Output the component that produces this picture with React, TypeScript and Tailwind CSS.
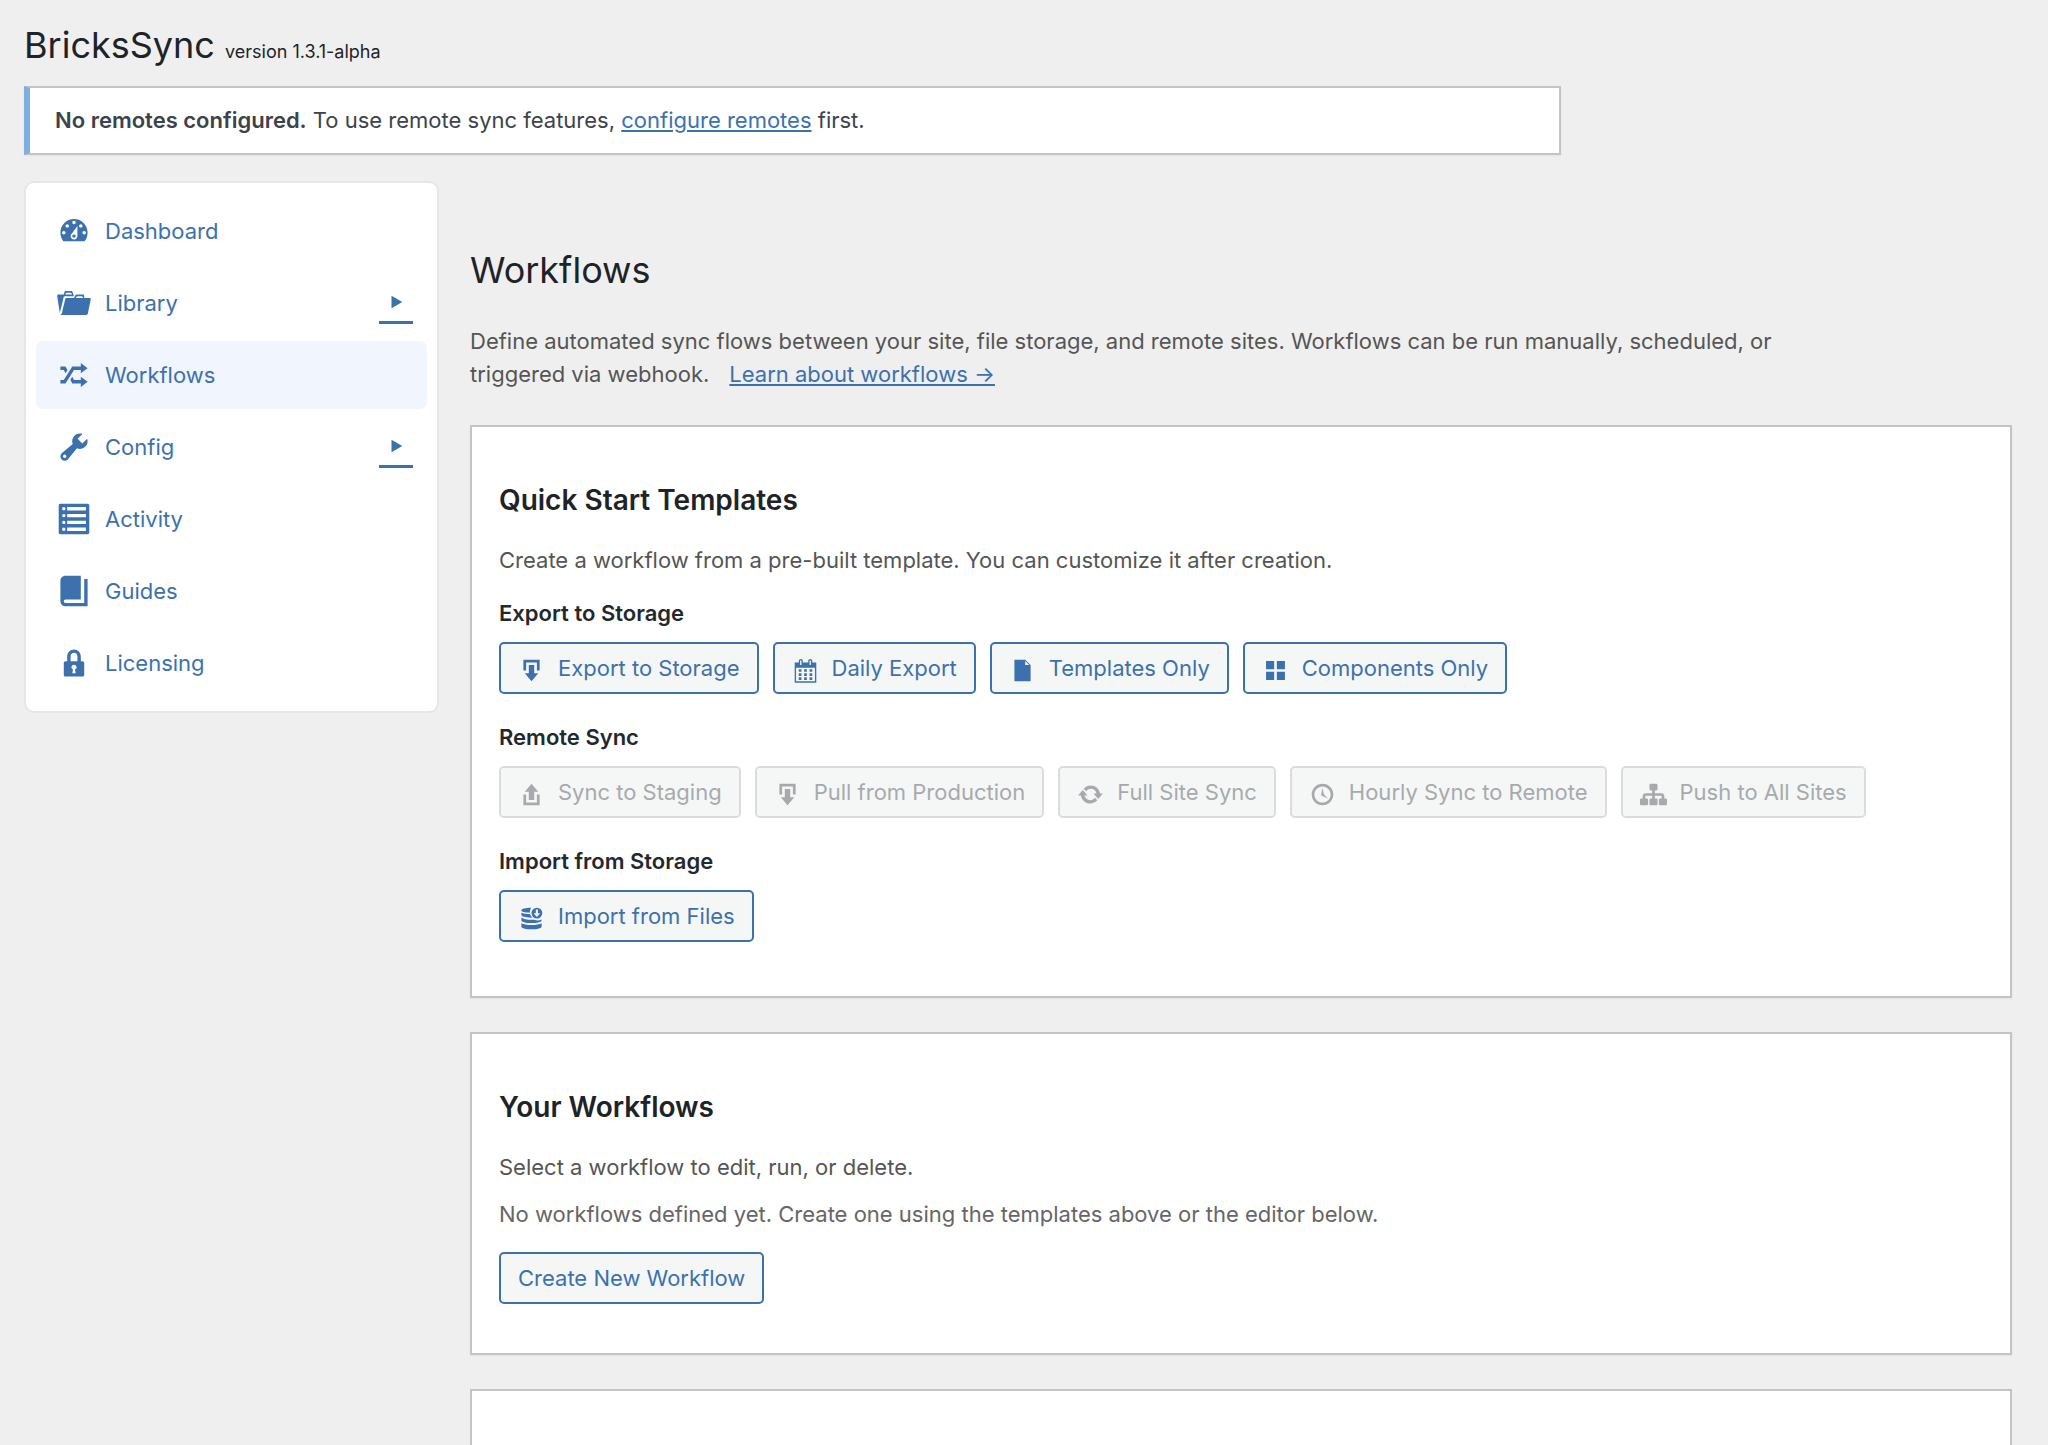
import type { ReactNode } from "react"

const ICONS = {
  dashboard:
    "M3.76 16h12.48c1.1-1.37 1.76-3.11 1.76-5 0-4.42-3.58-8-8-8s-8 3.58-8 8c0 1.89.66 3.63 1.76 5zM10 4c.55 0 1 .45 1 1s-.45 1-1 1-1-.45-1-1 .45-1 1-1zM6 6c.55 0 1 .45 1 1s-.45 1-1 1-1-.45-1-1 .45-1 1-1zm8 0c.55 0 1 .45 1 1s-.45 1-1 1-1-.45-1-1 .45-1 1-1zm-5.37 5.55L12 7v6c0 1.1-.9 2-2 2s-2-.9-2-2c0-.57.24-1.08.63-1.45zM4 10c.55 0 1 .45 1 1s-.45 1-1 1-1-.45-1-1 .45-1 1-1zm12 0c.55 0 1 .45 1 1s-.45 1-1 1-1-.45-1-1 .45-1 1-1zm-5 3c0-.55-.45-1-1-1s-1 .45-1 1 .45 1 1 1 1-.45 1-1z",
  portfolio:
    "M4 5H.78c-.37 0-.74.32-.69.84l1.56 9.99S3.5 8.47 3.86 6.7c.11-.53.61-.7.98-.7H10s-.7-2.08-.77-2.31C9.11 3.25 8.89 3 8.45 3H5.14c-.36 0-.7.23-.8.64C4.25 4.04 4 5 4 5zm4.88 0h-4s.42-1 .87-1h2.13c.48 0 1 1 1 1zM2.67 16.25c-.31.47-.76.75-1.26.75h15.73c.54 0 .92-.31 1.03-.83.44-2.19 1.68-8.44 1.68-8.44.07-.5-.3-.73-.62-.73H16V5.53c0-.16-.26-.53-.66-.53h-3.76c-.52 0-.87.58-.87.58L10 7H5.59c-.32 0-.63.19-.69.5 0 0-1.59 6.7-1.72 7.33-.07.37-.22.99-.51 1.42zM15.38 7H11s.58-1 1.13-1h2.29c.71 0 .96 1 .96 1z",
  shuffle:
    "M18 6.01L14 9V7h-4l-5 8H2v-2h2l5-8h5V3zM2 5h3l1.15 2.17-1.12 1.8L4 7H2V5zm16 9.01L14 17v-2H9l-1.15-2.17 1.12-1.8L10 13h4v-2z",
  wrench:
    "M16.68 9.77c-1.34 1.34-3.3 1.67-4.95.99l-5.41 6.52c-.99.99-2.59.99-3.58 0s-.99-2.59 0-3.57l6.52-5.42c-.68-1.65-.35-3.61.99-4.95 1.28-1.28 3.12-1.62 4.72-1.06l-2.89 2.89 2.82 2.82 2.86-2.87c.53 1.58.18 3.39-1.08 4.65zM3.81 16.21c.4.39 1.04.39 1.43 0 .4-.4.4-1.04 0-1.43-.39-.4-1.03-.4-1.43 0-.39.39-.39 1.03 0 1.43z",
  list:
    "M2 19h16c.55 0 1-.45 1-1V2c0-.55-.45-1-1-1H2c-.55 0-1 .45-1 1v16c0 .55.45 1 1 1zM4 3a1 1 0 1 1 0 2 1 1 0 0 1 0-2zM17 3v2H6V3h11zM4 7a1 1 0 1 1 0 2 1 1 0 0 1 0-2zM17 7v2H6V7h11zM4 11a1 1 0 1 1 0 2 1 1 0 0 1 0-2zM17 11v2H6v-2h11zM4 15a1 1 0 1 1 0 2 1 1 0 0 1 0-2zM17 15v2H6v-2h11z",
  book: "M16 3h2v16H5c-1.66 0-3-1.34-3-3V4c0-1.66 1.34-3 3-3h9v14H5c-.55 0-1 .45-1 1s.45 1 1 1h11V3z",
  lock:
    "M15 9h-1V6c0-2.2-1.8-4-4-4S6 3.8 6 6v3H5c-.5 0-1 .5-1 1v7c0 .5.5 1 1 1h10c.5 0 1-.5 1-1v-7c0-.5-.5-1-1-1zm-4 7H9l.4-2.2c-.5-.2-.9-.8-.9-1.3 0-.8.7-1.5 1.5-1.5s1.5.7 1.5 1.5c0 .6-.3 1.1-.9 1.3L11 16zm1-7H8V6c0-1.1.9-2 2-2s2 .9 2 2v3z",
  download: "M14.01 4v6h2V2H4v8h2.01V4h8zm-2 2v6h3l-5 6-5-6h3V6h4z",
  upload: "M8 14V8H5l5-6 5 6h-3v6H8zm-2 2v-6H4v8h12.01v-8H14v6H6z",
  calendar:
    "M15 4h3v15H2V4h3V3c0-.41.15-.76.44-1.06.29-.29.65-.44 1.06-.44s.77.15 1.06.44c.29.3.44.65.44 1.06v1h4V3c0-.41.15-.76.44-1.06.29-.29.65-.44 1.06-.44s.77.15 1.06.44c.29.3.44.65.44 1.06v1zM6 3v2.5c0 .14.05.26.15.36.09.09.21.14.35.14s.26-.05.35-.14c.1-.1.15-.22.15-.36V3c0-.14-.05-.26-.15-.35-.09-.1-.21-.15-.35-.15s-.26.05-.35.15c-.1.09-.15.21-.15.35zm7 0v2.5c0 .14.05.26.14.36.1.09.22.14.36.14s.26-.05.36-.14c.09-.1.14-.22.14-.36V3c0-.14-.05-.26-.14-.35-.1-.1-.22-.15-.36-.15s-.26.05-.36.15c-.09.09-.14.21-.14.35zm4 15V8H3v10h14zM7 9v2H5V9h2zm2 0h2v2H9V9zm4 2V9h2v2h-2zm-6 1v2H5v-2h2zm2 0h2v2H9v-2zm4 2v-2h2v2h-2zm-6 1v2H5v-2h2zm4 2H9v-2h2v2zm4 0h-2v-2h2v2z",
  document: "M12 2l4 4v12H4V2h8zm0 4h3l-3-3z",
  blocks: "M9 9V3H3v6h6zm8 0V3h-6v6h6zm-8 8v-6H3v6h6zm8 0v-6h-6v6h6z",
  update:
    "M10.2 3.28c3.53 0 6.43 2.61 6.92 6h2.08l-3.5 4-3.5-4h2.32c-.45-1.97-2.21-3.45-4.32-3.45-1.45 0-2.73.71-3.54 1.78L4.95 5.66C6.23 4.2 8.11 3.28 10.2 3.28zm-.4 13.44c-3.52 0-6.43-2.61-6.92-6H.8l3.5-4c1.17 1.33 2.33 2.67 3.5 4H5.48c.45 1.97 2.21 3.45 4.32 3.45 1.45 0 2.73-.71 3.54-1.78l1.71 1.95c-1.28 1.46-3.15 2.38-5.25 2.38z",
  clock:
    "M10 2c4.42 0 8 3.58 8 8s-3.58 8-8 8-8-3.58-8-8 3.58-8 8-8zm0 14c3.31 0 6-2.69 6-6s-2.69-6-6-6-6 2.69-6 6 2.69 6 6 6zm-.71-5.29c.07.05.14.1.23.15l-.02.02L14 13l-3.03-3.19L10 5l-.97 4.81h.01c0 .02-.01.05-.02.09S9 9.97 9 10c0 .28.1.52.29.71z",
  network:
    "M18 13h1c.55 0 1 .45 1 1.01v2.98c0 .56-.45 1.01-1 1.01h-4c-.55 0-1-.45-1-1.01v-2.98c0-.56.45-1.01 1-1.01h1v-2h-5v2h1c.55 0 1 .45 1 1.01v2.98c0 .56-.45 1.01-1 1.01H8c-.55 0-1-.45-1-1.01v-2.98c0-.56.45-1.01 1-1.01h1v-2H4v2h1c.55 0 1 .45 1 1.01v2.98C6 17.55 5.55 18 5 18H1c-.55 0-1-.45-1-1.01v-2.98C0 13.45.45 13 1 13h1v-2c0-1.1.9-2 2-2h5V7H8c-.55 0-1-.45-1-1.01V3.01C7 2.45 7.45 2 8 2h4c.55 0 1 .45 1 1.01v2.98C13 6.55 12.55 7 12 7h-1v2h5c1.1 0 2 .9 2 2v2z",
  databaseImport:
    "M9.8 2C5.8 2 2.5 2.7 2.5 4.1c0 .9 2.4 1.5 6.3 1.5 0-1.4.3-2.6 1-3.6zM2.5 5.7v1.6c0 1.3 3 2 7 2.1.4 0 .8 0 1.200-.1-.9-.7-1.500-1.600-1.800-2.600-2.900 0-5.100-.3-6.400-1zM2.500 9.300v2c0 1.300 3.300 2.100 7.500 2.100s7.500-.8 7.500-2.100v-.6c-.9.4-1.900.7-3 .7-.9 0-1.700-.2-2.400-.5-.7.100-1.400.1-2.100.1-3.400 0-6-.5-7.500-1.700zM2.500 13.500v2.400c0 1.400 3.300 2.100 7.500 2.100s7.500-.7 7.500-2.100v-2.400c-1.400.9-4.200 1.300-7.500 1.300s-6.100-.4-7.500-1.300zM14 2a4 4 0 1 0 0 8 4 4 0 0 0 0-8zM13.200 3.300h1.600v2.900h1.700L14 8.800l-2.500-2.600h1.700z",
  triangle: "M5 3l12 7-12 7z",
}

type IconName = keyof typeof ICONS

function Icon({ name, className }: { name: IconName; className: string }) {
  return (
    <svg viewBox="0 0 20 20" fill="currentColor" fillRule="evenodd" aria-hidden="true" className={`shrink-0 ${className}`}>
      <path d={ICONS[name]} />
    </svg>
  )
}

interface NavItem {
  label: string
  icon: IconName
  active?: boolean
  expandable?: boolean
}

const NAV: NavItem[] = [
  { label: "Dashboard", icon: "dashboard" },
  { label: "Library", icon: "portfolio", expandable: true },
  { label: "Workflows", icon: "shuffle", active: true },
  { label: "Config", icon: "wrench", expandable: true },
  { label: "Activity", icon: "list" },
  { label: "Guides", icon: "book" },
  { label: "Licensing", icon: "lock" },
]

interface Template {
  label: string
  icon: IconName
}

interface TemplateGroup {
  title: string
  disabled?: boolean
  templates: Template[]
}

const GROUPS: TemplateGroup[] = [
  {
    title: "Export to Storage",
    templates: [
      { label: "Export to Storage", icon: "download" },
      { label: "Daily Export", icon: "calendar" },
      { label: "Templates Only", icon: "document" },
      { label: "Components Only", icon: "blocks" },
    ],
  },
  {
    title: "Remote Sync",
    disabled: true,
    templates: [
      { label: "Sync to Staging", icon: "upload" },
      { label: "Pull from Production", icon: "download" },
      { label: "Full Site Sync", icon: "update" },
      { label: "Hourly Sync to Remote", icon: "clock" },
      { label: "Push to All Sites", icon: "network" },
    ],
  },
  {
    title: "Import from Storage",
    templates: [{ label: "Import from Files", icon: "databaseImport" }],
  },
]

function Button({ icon, disabled, children }: { icon?: IconName; disabled?: boolean; children: ReactNode }) {
  return (
    <button
      type="button"
      disabled={disabled}
      className="flex h-[52px] items-center gap-[13px] rounded-[5px] border-2 border-[#3c71ae] bg-[#f5f7f7] px-[17px] whitespace-nowrap text-[#3c71ae] disabled:border-[#dcdcde] disabled:text-[#a7aaad]"
    >
      {icon && <Icon name={icon} className="mt-[5px] size-[27px]" />}
      {children}
    </button>
  )
}

function Sidebar() {
  return (
    <nav className="flex w-[415px] shrink-0 flex-col gap-1 rounded-[10px] border-2 border-[#e6e6e7] bg-white px-[10px] py-[14px]">
      {NAV.map((item) => (
        <div
          key={item.label}
          className={`flex h-[68px] items-center rounded-[7px] pr-[14px] pl-[21px] text-[#3c71ae] ${item.active ? "bg-[#f0f5fe]" : ""}`}
        >
          <a href="#" className="flex flex-1 items-center gap-[14px]">
            <Icon name={item.icon} className="size-[34px]" />
            {item.label}
          </a>
          {item.expandable && (
            <button
              type="button"
              aria-label={`Expand ${item.label}`}
              className="flex h-[42px] w-[34px] items-center justify-center border-b-[3px] border-[#3c71ae]"
            >
              <Icon name="triangle" className="size-[18px]" />
            </button>
          )}
        </div>
      ))}
    </nav>
  )
}

function Card({ title, className, children }: { title: string; className: string; children: ReactNode }) {
  return (
    <section className={`border-2 border-[#c3c4c7] bg-white px-[27px] pt-[55px] shadow-xs ${className}`}>
      <h2 className="text-[28px] leading-[36px] font-semibold text-[#1d2327]">{title}</h2>
      {children}
    </section>
  )
}

export default function App() {
  return (
    <div className="flex min-h-screen flex-col bg-[#efefef] pr-9 pl-6 font-['Inter','Liberation_Sans',sans-serif] text-[22px] leading-[33px] text-[#3c434a]">
      <h1 className="pt-5 text-[36px] leading-[50px] text-[#1d2327]">
        BricksSync <span className="text-[18px]">version 1.3.1-alpha</span>
      </h1>

      <div className="mt-[9px] max-w-[1537px] border-2 border-l-[6px] border-[#c3c4c7] border-l-[#7faee0] bg-white px-[25px] py-4 shadow-xs">
        <p>
          <strong className="font-semibold">No remotes configured.</strong> To use remote sync features,{" "}
          <a href="#" className="text-[#3c71ae] underline">
            configure remotes
          </a>{" "}
          first.
        </p>
      </div>

      <div className="mt-[26px] flex flex-1 items-start gap-[31px]">
        <Sidebar />

        <main className="flex min-w-0 flex-1 flex-col self-stretch">
          <h1 className="mt-[64px] text-[36px] leading-[50px] text-[#1d2327]">Workflows</h1>
          <p className="mt-[30px] max-w-[1360px] text-[#555]">
            Define automated sync flows between your site, file storage, and remote sites. Workflows can be run
            manually, scheduled, or triggered via webhook.
            <a href="#" className="ml-5 text-[#3c71ae] underline">
              Learn about workflows →
            </a>
          </p>

          <Card title="Quick Start Templates" className="mt-[34px] pb-[54px]">
            <p className="mt-[26px] text-[#555]">
              Create a workflow from a pre-built template. You can customize it after creation.
            </p>
            <div className="mt-[20px] flex flex-col gap-[27px]">
              {GROUPS.map((group) => (
                <div key={group.title}>
                  <h3 className="font-semibold text-[#23282d]">{group.title}</h3>
                  <div className="mt-[12px] flex flex-wrap gap-[14px]">
                    {group.templates.map((t) => (
                      <Button key={t.label} icon={t.icon} disabled={group.disabled}>
                        {t.label}
                      </Button>
                    ))}
                  </div>
                </div>
              ))}
            </div>
          </Card>

          <Card title="Your Workflows" className="mt-[34px] pb-[49px]">
            <p className="mt-[26px] text-[#555]">Select a workflow to edit, run, or delete.</p>
            <p className="mt-[14px] mb-[21px] text-[#666]">
              No workflows defined yet. Create one using the templates above or the editor below.
            </p>
            <Button>Create New Workflow</Button>
          </Card>

          {/* editor panel, continues below the fold */}
          <section className="mt-[34px] flex-1 border-2 border-b-0 border-[#c3c4c7] bg-white" />
        </main>
      </div>
    </div>
  )
}
